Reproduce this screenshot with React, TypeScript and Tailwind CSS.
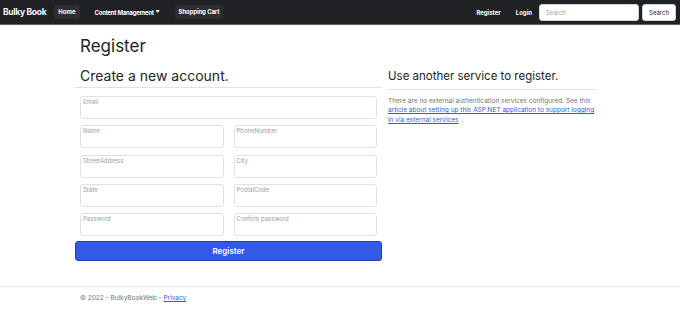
import React from "react";

const fields: [string, string][] = [
  ["Name", "PhoneNumber"],
  ["StreetAddress", "City"],
  ["State", "PostalCode"],
  ["Password", "Confirm password"],
];

function Field({ label }: { label: string }) {
  return (
    <div className="relative h-[23px] flex-1 rounded-[3px] border border-[#dee2e6] bg-white">
      <span className="absolute left-[2px] top-[2px] text-[6px] leading-none text-[#9aa0a6]">
        {label}
      </span>
    </div>
  );
}

export default function App() {
  return (
    <div className="flex min-h-[309px] flex-col bg-white font-['Inter',sans-serif] text-[#212529]">
      {/* Navbar */}
      <nav className="flex h-[25px] items-center border-b border-[#5c6166] bg-[#1f2124] pl-[3px] pr-[4px]">
        <span className="mr-[8px] text-[8.5px] font-bold tracking-[-0.3px] text-white">Bulky Book</span>
        <div className="flex items-center gap-[14px] text-[6px] font-bold text-white">
          <span className="rounded-[3px] bg-[#2c2e31] px-[4px] py-[3px] leading-[8px]">Home</span>
          <span className="flex items-center gap-[2px] px-[1px] tracking-[-0.25px]">
            Content Management
            <span className="text-[4px]">▼</span>
          </span>
          <span className="rounded-[3px] bg-[#2c2e31] px-[4px] py-[3px] leading-[8px] tracking-[-0.1px]">Shopping Cart</span>
        </div>
        <div className="ml-auto flex items-center text-[6px] font-bold text-white">
          <span className="mr-[15px]">Register</span>
          <span className="mr-[7px]">Login</span>
          <div className="flex h-[17px] w-[100px] items-center rounded-[3px] border border-[#ced4da] bg-white px-[6px] font-normal text-[#9aa0a6]">
            Search
          </div>
          <div className="ml-[3px] flex h-[17px] w-[34px] items-center justify-center rounded-[3px] border border-[#ced4da] bg-white font-normal text-[#212529]">
            Search
          </div>
        </div>
      </nav>

      {/* Main */}
      <main className="flex-1 pl-[75px]">
        <h1 className="mt-[11px] pl-[5px] text-[17px] leading-[20px] text-[#212529]">Register</h1>
        <div className="mt-[11px] flex gap-[5px]">
          <div className="w-[307px]">
            <h2 className="pl-[5px] text-[14px] leading-[17px]">Create a new account.</h2>
            <hr className="mt-[3px] border-[#dee2e6]" />
            <div className="mt-[8px] flex flex-col gap-[6.3px] px-[5px]">
              <div className="flex">
                <Field label="Email" />
              </div>
              {fields.map(([a, b]) => (
                <div key={a} className="flex gap-[10px]">
                  <Field label={a} />
                  <Field label={b} />
                </div>
              ))}
            </div>
            <button className="mt-[5px] flex h-[20px] w-[307px] items-center justify-center rounded-[3px] border border-[#1f3fb8] bg-[#3459e6] text-[8px] font-semibold text-white">
              Register
            </button>
          </div>
          <div className="w-[210px]">
            <h3 className="pl-[1px] pt-[2px] text-[11.5px] leading-[15px]">Use another service to register.</h3>
            <hr className="mt-[5px] border-[#dee2e6]" />
            <p className="mt-[7px] pl-[1px] text-[6.5px] leading-[9.3px] text-[#6c757d]">
              There are no external authentication services configured. See this{" "}
              <span className="text-[#3459e6] underline">
                article about setting up this ASP.NET application to support logging in via external services
              </span>
              <span className="ml-[3px] inline-block">.</span>
            </p>
          </div>
        </div>
      </main>

      {/* Footer */}
      <footer className="h-[23px] border-t border-[#e9ecef] pl-[80px] pt-[7px] text-[6.5px] text-[#6c757d]">
        © 2022 - BulkyBookWeb - <span className="text-[#3459e6] underline">Privacy</span>
      </footer>
    </div>
  );
}
